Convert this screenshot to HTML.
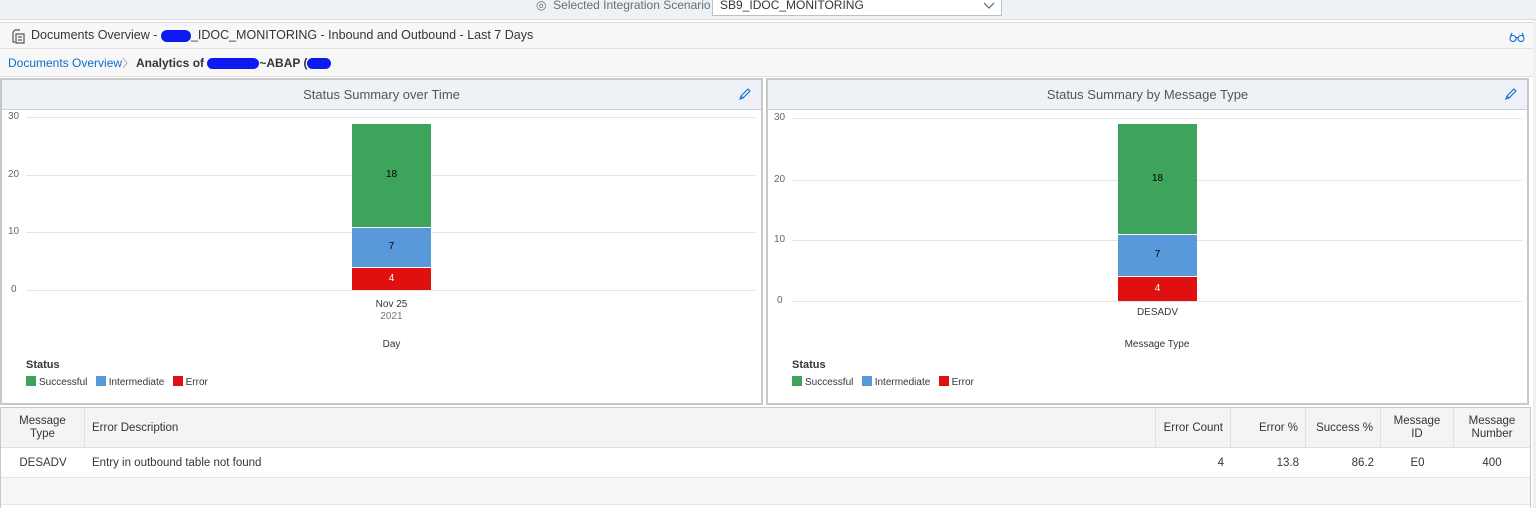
<!DOCTYPE html>
<html><head><meta charset="utf-8"><style>
*{box-sizing:border-box;margin:0;padding:0}
body{width:1536px;height:508px;overflow:hidden;background:#fff;font-family:"Liberation Sans",sans-serif;color:#32363a;position:relative}
.a{position:absolute}
.t{font-size:11px;white-space:nowrap}
.g{position:absolute;height:1px;background:#e5e5e5}
.th{position:absolute;top:0;height:39px;border-right:1px solid #e0e0e0;font-size:11.5px;color:#32363a;display:flex;align-items:center}
.td{position:absolute;font-size:11.5px;display:flex;align-items:center;height:28px}
.lg span{display:inline-block;width:10px;height:10px;vertical-align:-1px;margin-right:3px}
</style></head><body>
<div class="a" style="left:0;top:0;width:1536px;height:20px;background:#edf2f7;border-bottom:1px solid #d9dde2"></div>
<div class="a t" style="left:536px;top:-2px;font-size:12px;color:#6a6d70">◎ &nbsp;Selected Integration Scenario</div>
<div class="a" style="left:712px;top:-4px;width:290px;height:20px;background:#fff;border:1px solid #bfbfbf"></div>
<div class="a t" style="left:720px;top:-2px;font-size:12px;color:#32363a">SB9_IDOC_MONITORING</div>
<svg class="a" style="left:983px;top:2px" width="12" height="8" viewBox="0 0 12 8" fill="none" stroke="#4a6b8a" stroke-width="1.2"><path d="M1 1l5 5 5-5"/></svg>

<div class="a" style="left:0;top:22px;width:1534px;height:27px;background:#f7f7f7;border-top:1px solid #d9d9d9;border-bottom:1px solid #e0e0e0"></div>
<svg class="a" style="left:10px;top:28px" width="16" height="16" viewBox="0 0 16 16" fill="none" stroke="#555" stroke-width="1.2"><path d="M3 4v10h2M3 4l2-2h5"/><rect x="6" y="6" width="8" height="9"/><path d="M8 9h4M8 12h4"/></svg>
<div class="a t" style="left:31px;top:28px;font-size:12.5px">Documents Overview - <span style="display:inline-block;width:30px;height:12px;border-radius:6px;background:#0c1bf0;vertical-align:middle"></span>_IDOC_MONITORING - Inbound and Outbound - Last 7 Days</div>
<svg class="a" style="left:1509px;top:32px" width="16" height="10" viewBox="0 0 16 10" fill="none" stroke="#0a6ed1" stroke-width="1.1"><circle cx="4" cy="6.5" r="3"/><circle cx="12" cy="6.5" r="3"/><path d="M7 6c.6-.6 1.4-.6 2 0M1.5 4L3 1M14.5 4L13 1"/></svg>

<div class="a" style="left:0;top:49px;width:1534px;height:28px;background:#f7f7f7;border-bottom:1px solid #e0e0e0"></div>
<div class="a t" style="left:8px;top:56px;font-size:12px;color:#0a6ed1">Documents Overview</div>
<svg class="a" style="left:122px;top:57px" width="6" height="12" viewBox="0 0 6 12" fill="none" stroke="#aaa" stroke-width="1"><path d="M1 1l4 5-4 5"/></svg>
<div class="a t" style="left:136px;top:56px;font-size:12px;font-weight:bold">Analytics of <span style="display:inline-block;width:52px;height:11px;border-radius:6px;background:#0c1bf0;vertical-align:middle"></span>~ABAP (<span style="display:inline-block;width:24px;height:11px;border-radius:6px;background:#0c1bf0;vertical-align:middle"></span></div>

<!-- left panel -->
<div class="a" style="left:0;top:78px;width:763px;height:327px;border:2px solid #c8c8c8;background:#fff"></div>
<div class="a" style="left:2px;top:80px;width:759px;height:30px;background:#eef2f6;border-bottom:1px solid #c8d0d8"></div>
<div class="a t" style="left:0;top:87px;width:763px;text-align:center;font-size:13px;color:#555">Status Summary over Time</div>
<svg class="a" style="left:738px;top:88px" width="13" height="13" viewBox="0 0 13 13" fill="none" stroke="#0a6ed1" stroke-width="1.1"><path d="M2 11l1-3 7-7 2 2-7 7-3 1zM3 8l2 2"/></svg>
<div class="a t" style="left:8px;top:111px;font-size:10px;color:#666">30</div>
<div class="a t" style="left:8px;top:169px;font-size:10px;color:#666">20</div>
<div class="a t" style="left:8px;top:226px;font-size:10px;color:#666">10</div>
<div class="a t" style="left:11px;top:284px;font-size:10px;color:#666">0</div>
<div class="g" style="left:26px;top:117px;width:730px"></div>
<div class="g" style="left:26px;top:175px;width:730px"></div>
<div class="g" style="left:26px;top:232px;width:730px"></div>
<div class="g" style="left:26px;top:290px;width:730px"></div>
<div class="a" style="left:352px;top:124px;width:79px;height:103px;background:#3fa45b"></div>
<div class="a" style="left:352px;top:227px;width:79px;height:40px;background:#5899da;border-top:1px solid #fff"></div>
<div class="a" style="left:352px;top:267px;width:79px;height:23px;background:#e01010;border-top:1px solid #fff"></div>
<div class="a t" style="left:352px;top:169px;width:79px;text-align:center;font-size:10px;color:#000">18</div>
<div class="a t" style="left:352px;top:241px;width:79px;text-align:center;font-size:10px;color:#000">7</div>
<div class="a t" style="left:352px;top:273px;width:79px;text-align:center;font-size:10px;color:#fff">4</div>
<div class="a t" style="left:352px;top:299px;width:79px;text-align:center;font-size:10px">Nov 25</div>
<div class="a t" style="left:352px;top:311px;width:79px;text-align:center;font-size:10px;color:#777">2021</div>
<div class="a t" style="left:352px;top:339px;width:79px;text-align:center;font-size:10px">Day</div>
<div class="a t" style="left:26px;top:359px;font-size:11px;font-weight:bold">Status</div>
<div class="a t lg" style="left:26px;top:376px;font-size:10px"><span style="background:#3fa45b"></span>Successful &nbsp;&nbsp;<span style="background:#5899da"></span>Intermediate &nbsp;&nbsp;<span style="background:#e01010"></span>Error</div>

<!-- right panel -->
<div class="a" style="left:766px;top:78px;width:763px;height:327px;border:2px solid #c8c8c8;background:#fff"></div>
<div class="a" style="left:768px;top:80px;width:759px;height:30px;background:#eef2f6;border-bottom:1px solid #c8d0d8"></div>
<div class="a t" style="left:766px;top:87px;width:763px;text-align:center;font-size:13px;color:#555">Status Summary by Message Type</div>
<svg class="a" style="left:1504px;top:88px" width="13" height="13" viewBox="0 0 13 13" fill="none" stroke="#0a6ed1" stroke-width="1.1"><path d="M2 11l1-3 7-7 2 2-7 7-3 1zM3 8l2 2"/></svg>
<div class="a t" style="left:774px;top:112px;font-size:10px;color:#666">30</div>
<div class="a t" style="left:774px;top:174px;font-size:10px;color:#666">20</div>
<div class="a t" style="left:774px;top:234px;font-size:10px;color:#666">10</div>
<div class="a t" style="left:777px;top:295px;font-size:10px;color:#666">0</div>
<div class="g" style="left:792px;top:118px;width:730px"></div>
<div class="g" style="left:792px;top:180px;width:730px"></div>
<div class="g" style="left:792px;top:240px;width:730px"></div>
<div class="g" style="left:792px;top:301px;width:730px"></div>
<div class="a" style="left:1118px;top:124px;width:79px;height:110px;background:#3fa45b"></div>
<div class="a" style="left:1118px;top:234px;width:79px;height:42px;background:#5899da;border-top:1px solid #fff"></div>
<div class="a" style="left:1118px;top:276px;width:79px;height:25px;background:#e01010;border-top:1px solid #fff"></div>
<div class="a t" style="left:1118px;top:173px;width:79px;text-align:center;font-size:10px;color:#000">18</div>
<div class="a t" style="left:1118px;top:249px;width:79px;text-align:center;font-size:10px;color:#000">7</div>
<div class="a t" style="left:1118px;top:283px;width:79px;text-align:center;font-size:10px;color:#fff">4</div>
<div class="a t" style="left:1118px;top:307px;width:79px;text-align:center;font-size:10px">DESADV</div>
<div class="a t" style="left:1107px;top:339px;width:100px;text-align:center;font-size:10px">Message Type</div>
<div class="a t" style="left:792px;top:359px;font-size:11px;font-weight:bold">Status</div>
<div class="a t lg" style="left:792px;top:376px;font-size:10px"><span style="background:#3fa45b"></span>Successful &nbsp;&nbsp;<span style="background:#5899da"></span>Intermediate &nbsp;&nbsp;<span style="background:#e01010"></span>Error</div>

<!-- table -->
<div class="a" style="left:0;top:407px;width:1531px;height:101px;border:1px solid #c8c8c8;border-bottom:none;background:#fff">
 <div class="a" style="left:0;top:0;width:1529px;height:40px;background:#f4f4f4;border-bottom:1px solid #e0e0e0"></div>
 <div class="th" style="left:0;width:84px;justify-content:center;text-align:center;line-height:13px">Message<br>Type</div>
 <div class="th" style="left:84px;width:1071px;padding-left:7px">Error Description</div>
 <div class="th" style="left:1155px;width:75px;justify-content:flex-end;padding-right:7px">Error Count</div>
 <div class="th" style="left:1230px;width:75px;justify-content:flex-end;padding-right:7px">Error %</div>
 <div class="th" style="left:1305px;width:75px;justify-content:flex-end;padding-right:7px">Success %</div>
 <div class="th" style="left:1380px;width:73px;justify-content:center;text-align:center;line-height:13px">Message<br>ID</div>
 <div class="th" style="left:1453px;width:76px;justify-content:center;text-align:center;line-height:13px;border-right:none">Message<br>Number</div>
 <div class="td" style="left:0;top:41px;width:84px;justify-content:center">DESADV</div>
 <div class="td" style="left:91px;top:41px">Entry in outbound table not found</div>
 <div class="td" style="left:1155px;top:41px;width:68px;justify-content:flex-end">4</div>
 <div class="td" style="left:1230px;top:41px;width:68px;justify-content:flex-end">13.8</div>
 <div class="td" style="left:1305px;top:41px;width:68px;justify-content:flex-end">86.2</div>
 <div class="td" style="left:1380px;top:41px;width:73px;justify-content:center">E0</div>
 <div class="td" style="left:1453px;top:41px;width:76px;justify-content:center">400</div>
 <div class="a" style="left:0;top:69px;width:1529px;height:28px;background:#f7f7f7;border-top:1px solid #e5e5e5;border-bottom:1px solid #e5e5e5"></div>
</div>
<div class="a" style="left:1533px;top:20px;width:3px;height:488px;background:#f0f0f0"></div>
</body></html>
